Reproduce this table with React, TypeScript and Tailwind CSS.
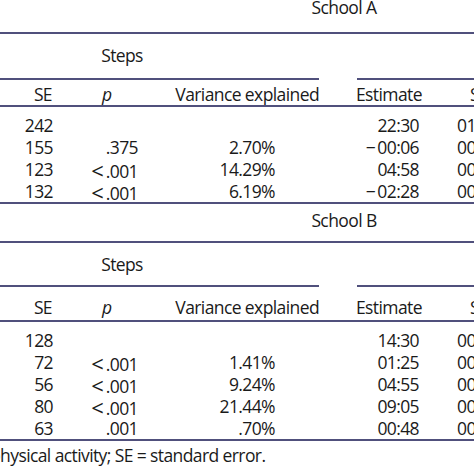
import React from "react";

const LINE = "bg-[#50507c]";

type Row = { se: string; p: string; v: string; est: string; last: string };

const LT = <span className="inline-block translate-y-[1px] text-[22px] leading-[22px] tracking-normal">&lt;</span>;

const rowsA: Row[] = [
  { se: "242", p: "", v: "", est: "22:30", last: "01:12" },
  { se: "155", p: ".375", v: "2.70%", est: "\u2212\u200900:06", last: "00:54" },
  { se: "123", p: "lt", v: "14.29%", est: "04:58", last: "00:42" },
  { se: "132", p: "lt", v: "6.19%", est: "\u2212\u200902:28", last: "00:46" },
];

const rowsB: Row[] = [
  { se: "128", p: "", v: "", est: "14:30", last: "00:48" },
  { se: "72", p: "lt", v: "1.41%", est: "01:25", last: "00:27" },
  { se: "56", p: "lt", v: "9.24%", est: "04:55", last: "00:21" },
  { se: "80", p: "lt", v: "21.44%", est: "09:05", last: "00:30" },
  { se: "63", p: ".001", v: ".70%", est: "00:48", last: "00:24" },
];

const GRID = "grid grid-cols-[53px_85px_181px_37px_64px_1fr] h-[22px] pt-[3px] items-start whitespace-nowrap";

function DataRow({ r }: { r: Row }) {
  return (
    <div className={GRID}>
      <div className="text-right">{r.se}</div>
      <div className="text-right">
        {r.p === "lt" ? (
          <>
            {LT}
            <span className="ml-[2px]">.001</span>
          </>
        ) : (
          r.p
        )}
      </div>
      <div className="text-right pr-[44px]">{r.v}</div>
      <div />
      <div className="text-right pr-[1px]">{r.est}</div>
      <div className="pl-[37px]">{r.last}</div>
    </div>
  );
}

function Header() {
  return (
    <div className={GRID}>
      <div className="text-right pr-[1px]">SE</div>
      <div className="pl-[49px] italic">p</div>
      <div className="text-right">Variance explained</div>
      <div />
      <div className="text-right">Estimate</div>
      <div className="pl-[50px]">SE</div>
    </div>
  );
}

function Segments() {
  return (
    <div className="flex h-[2px]">
      <div className={`w-[319px] ${LINE}`} />
      <div className="w-[38px]" />
      <div className={`flex-1 ${LINE}`} />
    </div>
  );
}

function Full() {
  return <div className={`h-[2px] w-full ${LINE}`} />;
}

export default function App() {
  return (
    <div
      className="w-[474px] h-[474px] overflow-hidden bg-white text-[#1a1a1a] text-[17.5px] font-[450] leading-[22px] tracking-[-0.6px]"
      style={{ fontFamily: '"Open Sans", sans-serif' }}
    >
      {/* School A */}
      <div className="h-[36px]">
        <div className="mt-[-4px] pl-[214px] text-center">School A</div>
      </div>
      <Full />
      <div className="h-[44px] pt-[10px]">
        <div className="w-[244px] text-center">Steps</div>
      </div>
      <Segments />
      <div className="h-[25px]">
        <Header />
      </div>
      <Full />
      <div className="h-[95px] pt-[4px]">
        {rowsA.map((r, i) => (
          <DataRow key={i} r={r} />
        ))}
      </div>
      <Full />
      {/* School B */}
      <div className="h-[37px] pt-[5px]">
        <div className="pl-[214px] text-center">School B</div>
      </div>
      <Full />
      <div className="h-[42px] pt-[10px]">
        <div className="w-[244px] text-center">Steps</div>
      </div>
      <Segments />
      <div className="h-[33px] pt-[6px]">
        <Header />
      </div>
      <Full />
      <div className="h-[117px] pt-[4px]">
        {rowsB.map((r, i) => (
          <DataRow key={i} r={r} />
        ))}
      </div>
      <Full />
      <div className="pt-[3px] whitespace-nowrap">
        <span className="ml-[-10px]">physical activity; SE = standard error.</span>
      </div>
    </div>
  );
}
